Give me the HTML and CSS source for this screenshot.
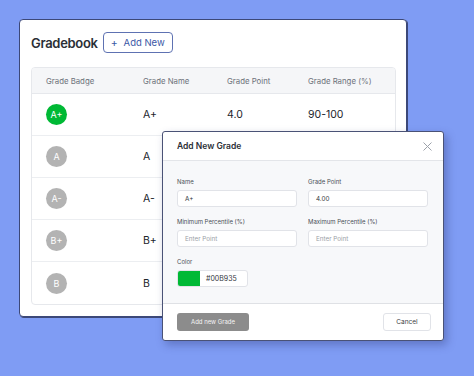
FILE: index.html
```html
<!DOCTYPE html>
<html>
<head>
<meta charset="utf-8">
<link rel="stylesheet" href="styles.css">
</head>
<body>
<div class="stage">
  <div class="card">
    <div class="card-head">
      <h1 class="title">Gradebook</h1>
      <button class="add-btn"><span class="plus">+</span>Add New</button>
    </div>
    <div class="table">
      <div class="row head">
        <div>Grade Badge</div>
        <div>Grade Name</div>
        <div>Grade Point</div>
        <div>Grade Range (%)</div>
      </div>
      <div class="row">
        <div><span class="badge green">A+</span></div>
        <div>A+</div>
        <div>4.0</div>
        <div>90-100</div>
      </div>
      <div class="row">
        <div><span class="badge">A</span></div>
        <div>A</div>
        <div></div>
        <div></div>
      </div>
      <div class="row">
        <div><span class="badge">A-</span></div>
        <div>A-</div>
        <div></div>
        <div></div>
      </div>
      <div class="row">
        <div><span class="badge">B+</span></div>
        <div>B+</div>
        <div></div>
        <div></div>
      </div>
      <div class="row last">
        <div><span class="badge">B</span></div>
        <div>B</div>
        <div></div>
        <div></div>
      </div>
    </div>
  </div>

  <div class="modal">
    <div class="modal-head">
      <span class="modal-title">Add New Grade</span>
      <svg class="close" width="9" height="9" viewBox="0 0 9 9"><path d="M0.5 0.5L8.5 8.5M8.5 0.5L0.5 8.5" stroke="#9ca1aa" stroke-width="1" fill="none"/></svg>
    </div>
    <div class="modal-body">
      <div class="grid">
        <div class="field">
          <label class="lbl">Name</label>
          <div class="input">A+</div>
        </div>
        <div class="field">
          <label class="lbl">Grade Point</label>
          <div class="input">4.00</div>
        </div>
        <div class="field">
          <label class="lbl">Minimum Percentile (%)</label>
          <div class="input ph">Enter Point</div>
        </div>
        <div class="field">
          <label class="lbl">Maximum Percentile (%)</label>
          <div class="input ph">Enter Point</div>
        </div>
        <div class="field">
          <label class="lbl">Color</label>
          <div class="color">
            <span class="swatch"></span>
            <span class="hex">#00B935</span>
          </div>
        </div>
      </div>
    </div>
    <div class="modal-foot">
      <button class="btn-primary">Add new Grade</button>
      <button class="btn-cancel">Cancel</button>
    </div>
  </div>
</div>
</body>
</html>
```

FILE: styles.css
```css
* { box-sizing: border-box; }
html, body { margin: 0; padding: 0; }
body {
  background: #7f9cf4;
  width: 474px;
  height: 376px;
  overflow: hidden;
  font-family: Inter, "Noto Sans", sans-serif;
}
.stage {
  position: relative;
  padding: 19px 0 0 19px;
}
.card {
  width: 388px;
  height: 298px;
  background: #fff;
  border: 1px solid #3c4878;
  border-radius: 4px;
  box-shadow: 1px 1px 0 #3c4878;
  padding: 12px 10px 11px 11px;
}
.card-head {
  display: flex;
  align-items: center;
  height: 21px;
  margin-bottom: 14px;
}
.title {
  margin: 0 5px 0 0;
  font-size: 13px;
  font-weight: 600;
  color: #2b2f36;
  letter-spacing: -0.3px;
}
.add-btn {
  height: 21px;
  width: 70px;
  border: 1px solid #5e72b2;
  border-radius: 4px;
  background: #fff;
  color: #3b58a6;
  font-family: inherit;
  font-size: 9.5px;
  padding: 0;
  display: flex;
  align-items: center;
  justify-content: center;
}
.plus { margin-right: 6px; font-size: 10.5px; }
.table {
  border: 1px solid #e6e8ec;
  border-radius: 4px;
  overflow: hidden;
}
.row {
  display: grid;
  grid-template-columns: 97px 84px 81px 1fr;
  padding-left: 14px;
  align-items: center;
  height: 42px;
  border-bottom: 1px solid #eceef1;
  font-size: 10.5px;
  color: #22252b;
}
.row.last { border-bottom: none; }
.row.head {
  height: 26px;
  background: #f5f6f8;
  color: #6d727b;
  font-size: 7.8px;
  border-bottom: 1px solid #e6e8ec;
}
.badge {
  display: inline-flex;
  width: 21px;
  height: 21px;
  border-radius: 50%;
  background: #b3b3b3;
  color: #fff;
  align-items: center;
  justify-content: center;
  font-size: 9px;
}
.badge.green { background: #00b935; }

.modal {
  position: absolute;
  left: 162px;
  top: 131px;
  width: 282px;
  height: 210px;
  background: #fff;
  border: 1px solid #4a5276;
  border-radius: 3px;
  box-shadow: 3px 4px 8px rgba(40, 50, 110, 0.35);
  display: flex;
  flex-direction: column;
  overflow: hidden;
}
.modal-head {
  height: 29px;
  display: flex;
  align-items: center;
  justify-content: space-between;
  padding: 0 11px 0 14px;
  border-bottom: 1px solid #e3e5e9;
}
.modal-title {
  font-size: 8.5px;
  font-weight: 600;
  color: #2b2f36;
}
.modal-body {
  background: #f7f8fa;
  padding: 16px 14px 16px 14px;
  border-bottom: 1px solid #dfe1e5;
}
.grid {
  display: grid;
  grid-template-columns: 120px 120px;
  column-gap: 11px;
  row-gap: 10px;
}
.field { display: flex; flex-direction: column; }
.lbl {
  font-size: 6px;
  color: #4a4f57;
  line-height: 9px;
  margin-bottom: 4px;
}
.input {
  height: 17px;
  background: #fff;
  border: 1px solid #e1e3e8;
  border-radius: 3px;
  font-size: 6.3px;
  color: #33363c;
  padding-left: 7px;
  display: flex;
  align-items: center;
}
.input.ph { color: #9a9ea6; }
.color {
  display: flex;
  width: 71px;
  height: 17px;
  background: #fff;
  border: 1px solid #e1e3e8;
  border-radius: 3px;
  overflow: hidden;
}
.swatch {
  width: 22px;
  background: #00b935;
}
.hex {
  font-size: 7px;
  color: #33363c;
  padding-left: 6px;
  display: flex;
  align-items: center;
}
.modal-foot {
  flex: 1;
  display: flex;
  justify-content: space-between;
  align-items: center;
  padding: 0 12px 1px 14px;
}
.btn-primary {
  width: 72px;
  height: 18px;
  border: none;
  border-radius: 3px;
  background: #8c8c8c;
  color: #f4f4f4;
  font-family: inherit;
  font-size: 6px;
  padding: 0;
}
.btn-cancel {
  width: 48px;
  height: 18px;
  border: 1px solid #e1e3e8;
  border-radius: 3px;
  background: #fff;
  color: #3a3d43;
  font-family: inherit;
  font-size: 6.5px;
  padding: 0;
}
```
